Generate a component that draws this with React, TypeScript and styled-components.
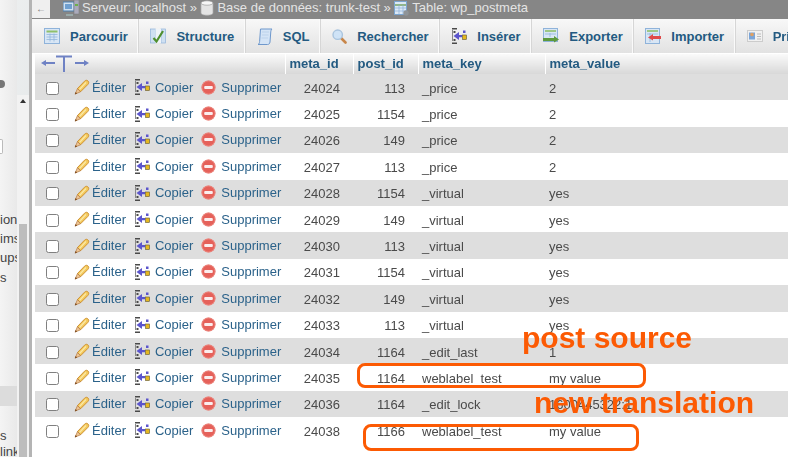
import * as React from 'react';
import styled, {createGlobalStyle} from "styled-components";

const GlobalStyle = createGlobalStyle`
	html, body {
		margin: 0;
		padding: 0;
		width: 788px;
		height: 457px;
		overflow: hidden;
		background: #fff;
		font-family: "Liberation Sans", Arial, sans-serif;
	}
`;

const Page = styled.div`
	width: 788px;
	height: 457px;
	display: flex;
	position: relative;
	overflow: hidden;
	filter: blur(0.4px);
`;
const Sidebar = styled.div`
	width: 29px;
	flex: none;
	display: flex;
	background: linear-gradient(100deg, #eef0f0 0%, #dfe3e5 100%);
`;
const SideContent = styled.div`
	width: 17px;
	flex: none;
	display: flex;
	flex-direction: column;
	overflow: hidden;
	background: linear-gradient(to right, #f4f4f4, #e9e9e9);
	font-size: 13px;
	color: #444;
`;
const SideDot = styled.span`
	width: 5px;
	height: 8px;
	margin: 80px 0 0;
	flex: none;
	border-radius: 0 4px 4px 0;
	background: #777;
`;
const SideInput = styled.span`
	width: 3px;
	height: 15px;
	margin: 51px 0 0;
	flex: none;
	box-sizing: border-box;
	border: 1px solid #bbb;
	border-left: none;
	border-radius: 0 2px 2px 0;
	background: #fff;
`;
const SideItem = styled.div<{$mt?: number; $h?: number; $active?: boolean}>`
	height: ${p => p.$h || 19.2}px;
	line-height: 19px;
	margin-top: ${p => p.$mt || 0}px;
	flex: none;
	white-space: nowrap;
	background: ${p => (p.$active ? '#dcdcdc' : 'transparent')};
`;
const SideScroll = styled.div`
	flex: 1;
	margin-top: 95px;
	background: #f2f2f2;
	display: flex;
	flex-direction: column;
	align-items: flex-start;
`;
const ScrollArrow = styled.span`
	width: 0;
	height: 0;
	margin: 4px 0 0 3px;
	border-left: 3.5px solid transparent;
	border-right: 3.5px solid transparent;
	border-bottom: 4px solid #333;
`;
const ScrollThumb = styled.div`
	width: 8px;
	flex: 1;
	margin: 121px 0 0 2px;
	background: #bdbdbd;
`;
const Divider = styled.div`
	width: 3px;
	flex: none;
	background: #b4b4b4;
`;
const Main = styled.div`
	flex: 1;
	min-width: 0;
	display: flex;
	flex-direction: column;
`;
const Crumbs = styled.div`
	height: 19px;
	flex: none;
	background: #868686;
	display: flex;
	align-items: flex-start;
	color: #e4e4e4;
	font-size: 13px;
	line-height: 14px;
	white-space: nowrap;
`;
const Back = styled.div`
	width: 18px;
	height: 18px;
	background: #efefef;
	color: #777;
	font-size: 10px;
	display: flex;
	align-items: center;
	justify-content: center;
	margin-right: 13px;
`;
const Crumb = styled.span`
	display: inline-flex;
	align-items: center;
	gap: 3px;
	margin-right: 3.5px;
`;
const Tabs = styled.div`
	height: 34px;
	flex: none;
	display: flex;
	background: linear-gradient(#f8f8f8, #e2e2e2);
	border-bottom: 1px solid #fff;
	white-space: nowrap;
`;
const Tab = styled.div`
	display: flex;
	align-items: center;
	gap: 10px;
	padding: 0 9.6px 0 12px;
	border-right: 1px solid #fafafa;
	box-shadow: 1px 0 0 #d6d6d6;
	color: #235a81;
	font-size: 13px;
	font-weight: bold;
`;
const Grid = styled.table`
	border-collapse: collapse;
	table-layout: fixed;
	width: 753px;
	margin-left: 3px;
	font-size: 13px;
`;
const HeadCell = styled.th`
	height: 20px;
	padding: 0 0 2px 4px;
	box-sizing: border-box;
	text-align: left;
	color: #235a81;
	font-size: 13px;
	background: linear-gradient(#fafafa, #d8d8d8);
	border-right: 1px solid #fff;
	&:last-child {
		border-right: none;
	}
`;
const ResizeIcon = styled.svg`
	display: block;
	margin-left: 2px;
`;
const Row = styled.tr<{$odd: boolean}>`
	height: 26.4px;
	background: ${p => (p.$odd ? '#dedede' : '#fff')};
	color: #4a4a4a;
`;
const Cell = styled.td<{$num?: boolean}>`
	padding: ${p => (p.$num ? '2px 13px 0 0' : '2px 4px 0')};
	text-align: ${p => (p.$num ? 'right' : 'left')};
	white-space: nowrap;
	overflow: visible;
`;
const ActionCell = styled.td`
	padding: 0;
`;
const Actions = styled.div`
	display: flex;
	align-items: center;
	color: #2b628a;
`;
const Box = styled.span`
	width: 13px;
	height: 13px;
	box-sizing: border-box;
	border: 1px solid #808080;
	border-radius: 2.5px;
	background: #fff;
	margin: 2px 15px 0 11px;
	flex: none;
`;
const Action = styled.span<{$gap: number}>`
	display: inline-flex;
	align-items: center;
	gap: ${p => p.$gap}px;
	margin-right: 8px;
`;
const Note = styled.div<{$top: number; $left: number}>`
	position: absolute;
	top: ${p => p.$top}px;
	left: ${p => p.$left}px;
	color: #fc5a03;
	font-size: 30px;
	font-weight: bold;
	line-height: 34px;
	white-space: nowrap;
`;
const Ring = styled.div<{$top: number; $left: number; $width: number; $height: number}>`
	position: absolute;
	top: ${p => p.$top}px;
	left: ${p => p.$left}px;
	width: ${p => p.$width}px;
	height: ${p => p.$height}px;
	box-sizing: border-box;
	border: 3px solid #fc5a03;
	border-radius: 8px;
`;

const Pencil = () => (
	<svg width="16" height="16" viewBox="0 0 16 16">
		<path d="M3.500 9.500L10.500 2.200c1.200-1.200 2.500-1.200 3.500-.2s1 2.300-.2 3.500L6.500 12.800z" fill="#f3c95c" stroke="#cf9233" strokeWidth="1"/>
		<path d="M5.500 10.500l6.500-7" stroke="#fbe9a8" strokeWidth="1.200"/>
		<path d="M3.500 9.500L6.500 12.800 1.200 15z" fill="#edc595" stroke="#b5773a" strokeWidth=".7"/>
		<path d="M.8 15.500l.8-2.400 1.500 1.400z" fill="#7a4a20"/>
	</svg>
);
const InsertIcon = () => (
	<svg width="16" height="16" viewBox="0 0 16 16">
		<path d="M1 0h5v1.500H1zM2.500 3h2v2h-2zM2.500 11h2v2h-2zM1 14.500h5V16H1z" fill="#4a4a4a"/>
		<path d="M1 2h1v11H1z" fill="#888"/>
		<path d="M2.500 8l5.500-4V7h3v2.200H8V12z" fill="#5b55cc"/>
		<rect x="12" y="2.500" width="2.500" height="2.500" fill="#5b55cc"/>
		<rect x="11.500" y="7" width="4" height="4.500" fill="#e5b820" stroke="#5c5330" strokeWidth=".6"/>
	</svg>
);
const DropIcon = () => (
	<svg width="15" height="15" viewBox="0 0 15 15">
		<circle cx="7.500" cy="7.500" r="7" fill="#e5615a"/>
		<circle cx="7.500" cy="7.500" r="6.500" fill="none" stroke="#f09a90" strokeWidth=".6"/>
		<rect x="3.200" y="6" width="8.600" height="3" rx="1" fill="#fbeeee"/>
	</svg>
);
const ServerIcon = () => (
	<svg width="16" height="16" viewBox="0 0 16 16">
		<rect x="0" y="2" width="11" height="9" fill="#cfe0f0" stroke="#4d7fae"/>
		<rect x="2" y="4" width="7" height="5" fill="#6f9fcf"/>
		<rect x="11" y="0" width="5" height="14" fill="#aab" stroke="#777" strokeWidth=".5"/>
		<rect x="12" y="4" width="3" height="2" fill="#6cb04a"/>
		<path d="M3 14h7v2H3z" fill="#9aa"/>
	</svg>
);
const DbIcon = () => (
	<svg width="14" height="16" viewBox="0 0 14 16">
		<path d="M1 3v10c0 3 12 3 12 0V3z" fill="#e4e4e4" stroke="#aaa" strokeWidth=".7"/>
		<ellipse cx="7" cy="3" rx="6" ry="2.200" fill="#f7f7f7" stroke="#999" strokeWidth=".7"/>
	</svg>
);
const TableSmallIcon = () => (
	<svg width="15" height="16" viewBox="0 0 15 16">
		<rect x=".5" y="1.500" width="12" height="13" fill="#dce9f6" stroke="#7ba5d0"/>
		<path d="M1 5h11" stroke="#6f9f5a" strokeWidth="1.400"/>
		<path d="M1 8h11M1 11h11M5 5v9M9 5v9" stroke="#8ab0d8" strokeWidth=".7"/>
		<circle cx="12" cy="13" r="2.700" fill="#8f9498"/>
	</svg>
);
const BrowseIcon = () => (
	<svg width="16" height="16" viewBox="0 0 16 16">
		<rect x=".5" y=".5" width="15" height="15" fill="#d8e6f5" stroke="#8fb3da"/>
		<path d="M2.500 3.500h11" stroke="#8fc06a" strokeWidth="2"/>
		<path d="M2.500 6.500h11M2.500 9h11M2.500 11.500h11M6 5.500v8M10 5.500v8" stroke="#93b6dc" strokeWidth=".8"/>
	</svg>
);
const StructureIcon = () => (
	<svg width="16" height="16" viewBox="0 0 16 16">
		<rect x=".5" y="1" width="5" height="14" fill="#cfe0f2" stroke="#8fb3da" strokeWidth=".7"/>
		<rect x="11" y="1" width="4.500" height="14" fill="#cfe0f2" stroke="#8fb3da" strokeWidth=".7"/>
		<rect x="5.500" y="1" width="5.500" height="14" fill="#eef3f8"/>
		<path d="M3.500 10l3 3.500L13 3" fill="none" stroke="#4f8f2f" strokeWidth="2.200"/>
	</svg>
);
const SqlIcon = () => (
	<svg width="16" height="17" viewBox="0 0 16 17">
		<path d="M3.500 1h11.500c-1.200 1-1.200 2.500-1.300 4L13 14c-.2 1.500-1 2.500-2.500 2.500H1c1.200-.6 1.500-1.500 1.600-3z" fill="#d4e4f6" stroke="#6f98cc"/>
		<path d="M5 4h7M5 7h6.500M4.500 10h6.500" stroke="#b3cbe6" strokeWidth=".7"/>
	</svg>
);
const SearchIcon = () => (
	<svg width="15" height="15" viewBox="0 0 15 15">
		<path d="M9 9l4.500 4.500" stroke="#c8864a" strokeWidth="2.600" strokeLinecap="round"/>
		<circle cx="5.700" cy="5.700" r="4.700" fill="#cfe3f6" stroke="#a9c4de" strokeWidth="1.400"/>
	</svg>
);
const ExportIcon = () => (
	<svg width="16" height="16" viewBox="0 0 16 16">
		<rect x=".5" y=".5" width="14" height="13" fill="#d8e6f5" stroke="#8fb3da"/>
		<path d="M2 3h11" stroke="#8fc06a" strokeWidth="1.600"/>
		<path d="M2 6h11M7 5v4" stroke="#93b6dc" strokeWidth=".8"/>
		<path d="M0 10h11V8l5 3.500-5 3V13H0z" fill="#5e9a3e"/>
	</svg>
);
const ImportIcon = () => (
	<svg width="16" height="16" viewBox="0 0 16 16">
		<rect x=".5" y=".5" width="14" height="15" fill="#d8e6f5" stroke="#8fb3da"/>
		<path d="M2 3h11" stroke="#8fc06a" strokeWidth="1.600"/>
		<path d="M2 6h11M5 5v9" stroke="#93b6dc" strokeWidth=".8"/>
		<path d="M16 8H8V6L3 9.500l5 3V11h8z" fill="#df4a4a"/>
	</svg>
);
const PrivIcon = () => (
	<svg width="16" height="14" viewBox="0 0 16 14">
		<rect x=".5" y="1.500" width="15" height="11" fill="#f1f1f1" stroke="#ccc"/>
		<rect x="2" y="3.500" width="6" height="7" fill="#7ba5d8"/>
		<circle cx="5" cy="5.500" r="1.800" fill="#e0a060"/>
		<path d="M10 5h4M10 7.500h4M10 10h4" stroke="#bbb"/>
	</svg>
);

const rows: [number, number, string, string][] = [
	[24024, 113, '_price', '2'],
	[24025, 1154, '_price', '2'],
	[24026, 149, '_price', '2'],
	[24027, 113, '_price', '2'],
	[24028, 1154, '_virtual', 'yes'],
	[24029, 149, '_virtual', 'yes'],
	[24030, 113, '_virtual', 'yes'],
	[24031, 1154, '_virtual', 'yes'],
	[24032, 149, '_virtual', 'yes'],
	[24033, 113, '_virtual', 'yes'],
	[24034, 1164, '_edit_last', '1'],
	[24035, 1164, 'weblabel_test', 'my value'],
	[24036, 1164, '_edit_lock', '1600445322:1'],
	[24038, 1166, 'weblabel_test', 'my value'],
];

const tabs: [string, React.ReactNode][] = [
	['Parcourir', <BrowseIcon/>],
	['Structure', <StructureIcon/>],
	['SQL', <SqlIcon/>],
	['Rechercher', <SearchIcon/>],
	['Insérer', <InsertIcon/>],
	['Exporter', <ExportIcon/>],
	['Importer', <ImportIcon/>],
	['Privilèges', <PrivIcon/>],
];

export default class App extends React.Component {
	public render() {
		return (
			<Page>
				<GlobalStyle/>
				<Sidebar>
					<SideContent>
						<SideDot/>
						<SideInput/>
						<SideItem $mt={56}>ion</SideItem>
						<SideItem>ims</SideItem>
						<SideItem>ups</SideItem>
						<SideItem>s</SideItem>
						<SideItem $mt={99} $h={20} $active/>
						<SideItem $mt={20} $h={16}>s</SideItem>
						<SideItem>link</SideItem>
					</SideContent>
					<SideScroll>
						<ScrollArrow/>
						<ScrollThumb/>
					</SideScroll>
				</Sidebar>
				<Divider/>
				<Main>
					<Crumbs>
						<Back>←</Back>
						<Crumb><ServerIcon/>Serveur: localhost »</Crumb>
						<Crumb><DbIcon/>Base de données: trunk-test »</Crumb>
						<Crumb><TableSmallIcon/>Table: wp_postmeta</Crumb>
					</Crumbs>
					<Tabs>
						{tabs.map(([name, icon]) => (
							<Tab key={name}>{icon}{name}</Tab>
						))}
					</Tabs>
					<Grid>
						<colgroup>
							<col style={{width: 250}}/>
							<col style={{width: 68}}/>
							<col style={{width: 65}}/>
							<col style={{width: 127}}/>
							<col/>
						</colgroup>
						<thead>
							<tr>
								<HeadCell>
									<ResizeIcon width="48" height="17" viewBox="0 0 48 17">
										<path d="M0 8l5-3v2h9v2H5v2zM48 8l-5-3v2h-9v2h9v2z" fill="#6f82c4"/>
										<path d="M15 1.500h16M23 1.500V17" stroke="#6f82c4" strokeWidth="2"/>
									</ResizeIcon>
								</HeadCell>
								<HeadCell>meta_id</HeadCell>
								<HeadCell>post_id</HeadCell>
								<HeadCell>meta_key</HeadCell>
								<HeadCell>meta_value</HeadCell>
							</tr>
						</thead>
						<tbody>
							{rows.map((r, i) => (
								<Row key={r[0]} $odd={i % 2 === 0}>
									<ActionCell>
										<Actions>
											<Box/>
											<Action $gap={2}><Pencil/>Éditer</Action>
											<Action $gap={5}><InsertIcon/>Copier</Action>
											<Action $gap={5}><DropIcon/>Supprimer</Action>
										</Actions>
									</ActionCell>
									<Cell $num>{r[0]}</Cell>
									<Cell $num>{r[1]}</Cell>
									<Cell>{r[2]}</Cell>
									<Cell>{r[3]}</Cell>
								</Row>
							))}
						</tbody>
					</Grid>
				</Main>
				<Note $top={321} $left={522}>post source</Note>
				<Note $top={386} $left={534}>new translation</Note>
				<Ring $top={363} $left={357} $width={289} $height={25}/>
				<Ring $top={424} $left={363} $width={276} $height={27}/>
			</Page>
		);
	}
}
